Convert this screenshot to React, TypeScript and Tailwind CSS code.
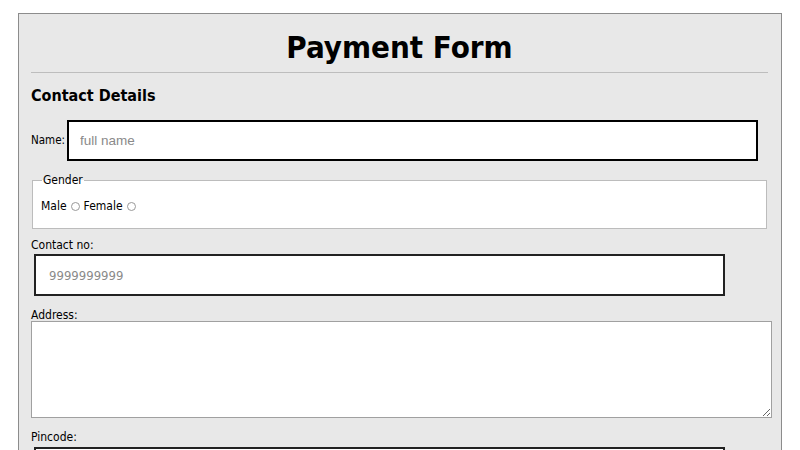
import React from 'react';

const font = { fontFamily: '"DejaVu Sans Condensed", "DejaVu Sans", Verdana, sans-serif', fontStretch: 'condensed' };

function Radio({ name }: { name: string }) {
  return (
    <input
      type="radio"
      name={name}
      className="appearance-none w-[9px] h-[9px] rounded-full border border-[#999] bg-white mx-[4px] align-middle"
    />
  );
}

export default function App() {
  return (
    <div className="min-h-screen bg-white pt-[13px] pl-[18px] text-[12px] text-black" style={font}>
      <div className="w-[764px] border border-[#8c8c8c] bg-[#e8e8e8] pl-[12px] pr-[13px] pb-[40px]">
        <h1 className="text-center font-bold text-[31px] leading-none pt-[18px] pb-[9px]">
          Payment Form
        </h1>
        <hr className="border-0 border-t border-[#bdbdbd]" />

        <h2 className="font-bold text-[16px] mt-[15px] mb-[16px] leading-none">Contact Details</h2>

        <div className="flex items-center">
          <label className="w-[36px] text-[11.5px]">Name:</label>
          <input
            placeholder="full name"
            className="w-[691px] h-[41px] border-2 border-black bg-white pl-[11px] text-[13.5px] placeholder:text-[#8a8a8a]"
            style={{ fontFamily: '"Liberation Sans", Arial, sans-serif' }}
          />
        </div>

        <fieldset className="mt-[13px] ml-px mr-px border border-[#bcbcbc] bg-white px-[8px] pt-0 h-[55px]">
          <legend className="px-px text-[12px] leading-none ml-px">Gender</legend>
          <div className="flex items-center mt-[14px] leading-none">
            <span>Male</span>
            <Radio name="g" />
            <span>Female</span>
            <Radio name="g" />
          </div>
        </fieldset>

        <label className="block mt-[10px] leading-none">Contact no:</label>
        <input
          placeholder="9999999999"
          className="block mt-[3px] ml-[3px] w-[691px] h-[42px] border-2 border-[#222] bg-white pl-[13px] text-[13px] placeholder:text-[#8a8a8a]"
          style={font}
        />

        <label className="block mt-[13px] leading-none">Address:</label>
        <textarea className="block mt-0 w-[741px] h-[97px] border border-[#a0a0a0] bg-white" />

        <label className="block mt-[13px] leading-none">Pincode:</label>
        <input
          className="block mt-[4px] ml-[3px] w-[691px] h-[42px] border-2 border-[#222] bg-white"
        />
      </div>
    </div>
  );
}
